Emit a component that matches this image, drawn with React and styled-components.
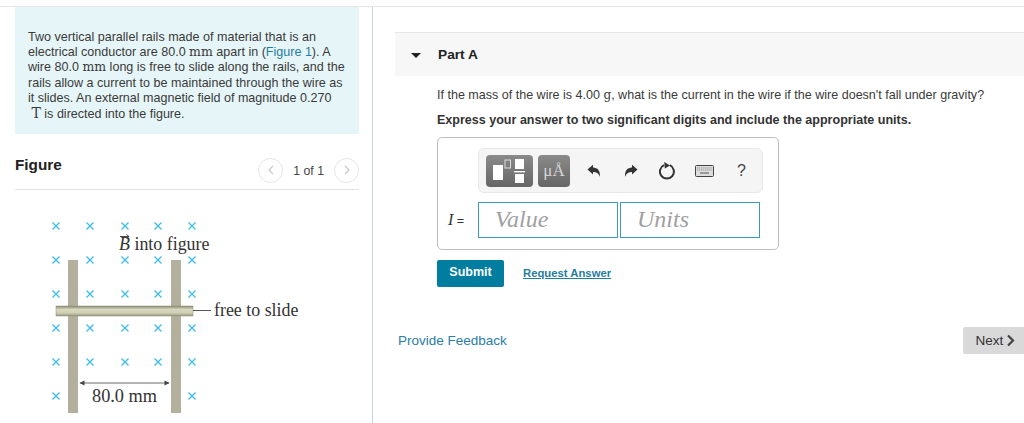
import React from 'react';
import styled, { createGlobalStyle } from 'styled-components';

const GlobalStyle = createGlobalStyle`
  html, body {
    margin: 0;
    padding: 0;
    background: #fff;
  }
  body {
    font-family: "Liberation Sans", Arial, sans-serif;
    color: #333;
    overflow: hidden;
  }
`

const Page = styled.div`
  width: 1024px;
  height: 423px;
  box-sizing: border-box;
  padding-top: 6px;
  overflow: hidden;
`

const Columns = styled.div`
  display: flex;
  height: 417px;
  border-top: 1px solid #e6e6e6;
`

const LeftPane = styled.section`
  width: 373px;
  box-sizing: border-box;
  padding: 0 13px 0 15px;
  border-right: 1px solid #c3d4e4;
`

const Statement = styled.div`
  background: #e6f5f7;
  height: 127px;
  box-sizing: border-box;
  padding: 22.5px 0 0 13px;
  font-size: 12.55px;
  line-height: 15.45px;
  color: #3a3a3a;
  white-space: nowrap;
`

const MathText = styled.span`
  font-family: "DejaVu Serif", "Liberation Serif", serif;
  font-size: ${p => p.$size || 12.5}px;
  line-height: 0;
`

const InlineLink = styled.a`
  color: #1f7d9f;
`

const FigureHead = styled.div`
  display: flex;
  align-items: center;
  justify-content: space-between;
  height: 56px;
  padding-top: 17px;
  box-sizing: border-box;
  border-bottom: 1px solid #e3e3e3;
`

const FigureTitle = styled.h3`
  margin: 0 0 10px;
  font-size: 15.3px;
  font-weight: 700;
  color: #222;
`

const Pager = styled.div`
  display: flex;
  align-items: center;
  gap: 10px;
  font-size: 12.3px;
  color: #444;
`

const PagerLabel = styled.span`
  margin-top: 2px;
`

const PagerButton = styled.span`
  width: 23px;
  height: 23px;
  border: 1px solid #e6e6e6;
  border-radius: 50%;
  display: flex;
  align-items: center;
  justify-content: center;
`

const Diagram = styled.svg`
  display: block;
  margin: 30px 0 0 15px;
`

const RightPane = styled.section`
  flex: 1;
  padding: 25px 0 0 22px;
  min-width: 0;
`

const PartHeader = styled.div`
  height: 44px;
  box-sizing: border-box;
  background: #f7f7f7;
  border-top: 1px solid #e6e6e6;
  display: flex;
  align-items: center;
  gap: 17px;
  padding: 0 0 1px 16px;
  font-size: 13.7px;
  font-weight: 700;
  color: #222;
`

const Caret = styled.span`
  width: 0;
  height: 0;
  border-left: 5px solid transparent;
  border-right: 5px solid transparent;
  border-top: 5px solid #222;
  margin-top: 2px;
`

const PartBody = styled.div`
  padding-left: 42px;
`

const Question = styled.p`
  margin: 11px 0 0;
  font-size: 12.54px;
  line-height: 16px;
  white-space: nowrap;
  color: #3a3a3a;
`

const Instruction = styled.p`
  margin: 9px 0 0;
  font-size: 12.54px;
  line-height: 16px;
  font-weight: 700;
  color: #333;
`

const AnswerBox = styled.div`
  width: 342px;
  height: 113px;
  box-sizing: border-box;
  margin-top: 9px;
  padding: 10px 15px 0 40px;
  border: 1px solid #bdbdbd;
  border-radius: 5px;
`

const Toolbar = styled.div`
  height: 45px;
  width: 285px;
  box-sizing: border-box;
  background: #f5f5f5;
  border: 1px solid #e8e8e8;
  border-radius: 6px;
  display: flex;
  align-items: center;
  padding-left: 7px;
`

const ToolButton = styled.span`
  width: ${p => p.$width}px;
  height: 32px;
  margin-right: 5px;
  border-radius: 4px;
  background: linear-gradient(#8a8a8a, #666);
  display: flex;
  align-items: center;
  justify-content: center;
  color: #d6d6d6;
  font-family: "Liberation Serif", serif;
  font-size: 17px;
`

const ToolIcon = styled.span`
  width: 37px;
  display: flex;
  justify-content: center;
  font-size: 16px;
  color: #444;
`

const InputRow = styled.div`
  display: flex;
  align-items: center;
  margin-top: 9px;
  margin-left: -30px;
`

const VarLabel = styled.label`
  width: 30px;
  font-size: 12.5px;
  color: #333;

  i {
    font-family: "Liberation Serif", serif;
    font-size: 16px;
  }
`

const AnswerInput = styled.div`
  width: 140px;
  height: 36px;
  box-sizing: border-box;
  margin-right: 2px;
  border: 1.5px solid #3a9ab8;
  padding-left: 16px;
  font-family: "Liberation Serif", serif;
  font-style: italic;
  font-size: 24px;
  line-height: 33px;
  color: #a0a0a0;
`

const Actions = styled.div`
  display: flex;
  align-items: center;
  gap: 19px;
  margin-top: 10px;
`

const Submit = styled.button`
  width: 67px;
  height: 27px;
  padding: 0 0 3px;
  border: 0;
  border-radius: 2px;
  background: #007d9f;
  color: #fff;
  font-family: inherit;
  font-size: 12.5px;
  font-weight: 700;
`

const RequestLink = styled.a`
  font-size: 11.3px;
  font-weight: 700;
  color: #1f7d9f;
  text-decoration: underline;
  margin-bottom: 1px;
`

const Footer = styled.div`
  display: flex;
  align-items: center;
  justify-content: space-between;
  margin: 40px 0 0 3px;
`

const Feedback = styled.a`
  font-size: 13.5px;
  color: #2a7da3;
`

const Next = styled.button`
  width: 61px;
  height: 27px;
  padding: 0 0 0 4px;
  border: 0;
  border-radius: 2px 0 0 2px;
  background: #d9d9d9;
  color: #333;
  font-family: inherit;
  font-size: 13.5px;
  display: flex;
  align-items: center;
  justify-content: center;
  gap: 3px;
`

const COLS = [26, 60, 95, 128, 162];
const ROWS = [6, 40, 74, 108, 142, 176];

function Cross({ x, y }) {
  return (
    <path
      d={`M${x - 3.5} ${y - 3.5}L${x + 3.5} ${y + 3.5}M${x + 3.5} ${y - 3.5}L${x - 3.5} ${y + 3.5}`}
      stroke="#3cbcec"
      strokeWidth="1.3"
    />
  );
}

function FigureDrawing() {
  const crosses = [];
  ROWS.forEach((y, r) => {
    COLS.forEach((x, c) => {
      if (r === 5 && c > 0 && c < 4) return;
      crosses.push(<Cross key={`${r}-${c}`} x={x} y={y} />);
    });
  });
  return (
    <Diagram width="290" height="200" viewBox="0 0 290 200">
      <defs>
        <linearGradient id="bar" x1="0" y1="0" x2="0" y2="1">
          <stop offset="0" stopColor="#8b8b72" />
          <stop offset="0.35" stopColor="#d8d8c0" />
          <stop offset="0.7" stopColor="#cfcfb4" />
          <stop offset="1" stopColor="#96967e" />
        </linearGradient>
      </defs>
      {crosses}
      <rect x="38" y="40" width="10" height="153" fill="#b3b19e" />
      <rect x="141" y="40" width="10" height="153" fill="#b3b19e" />
      <rect x="26" y="86" width="137" height="10" fill="url(#bar)" stroke="#8f8f78" strokeWidth="0.5" />
      <path d="M163 90.5H181" stroke="#444" strokeWidth="0.9" />
      <text x="184" y="95.5" fontFamily="Liberation Serif, serif" fontSize="17.9" fill="#333">free to slide</text>
      <text x="89" y="30" fontFamily="Liberation Serif, serif" fontSize="17.9" fill="#333">
        <tspan fontStyle="italic">B</tspan> into figure
      </text>
      <path d="M90 16.5H99M96.5 14.5L99 16.5L96.5 18.5" fill="none" stroke="#333" strokeWidth="0.9" />
      <path d="M50 163H139" stroke="#444" strokeWidth="0.8" />
      <path d="M49.5 163L54.5 160.5V165.5ZM139.5 163L134.5 160.5V165.5Z" fill="#444" />
      <text x="62" y="182" fontFamily="Liberation Serif, serif" fontSize="18.3" fill="#333">80.0 mm</text>
    </Diagram>
  );
}

function TemplateIcon() {
  return (
    <svg width="34" height="24" viewBox="0 0 34 24">
      <rect x="0" y="6" width="10" height="15" fill="#fff" />
      <rect x="12" y="1" width="5.5" height="8" fill="none" stroke="#ddd" strokeWidth="1" />
      <rect x="22" y="0" width="9" height="10" fill="#fff" />
      <rect x="21" y="12" width="11" height="1.4" fill="#fff" />
      <rect x="22" y="15" width="9" height="9" fill="#fff" />
    </svg>
  );
}

function ArrowIcon({ flip }) {
  return (
    <svg width="14" height="14" viewBox="0 0 14 14" style={flip ? { transform: 'scaleX(-1)' } : undefined}>
      <path d="M0.5 5.5L6 0.8V3.6C10.5 3.8 13.3 6.6 13 12.8C11.8 9.6 9.8 8 6 8V10.6Z" fill="#333" />
    </svg>
  );
}

function RefreshIcon() {
  return (
    <svg width="17" height="18" viewBox="0 0 17 18">
      <path d="M10.8 3.2A7 7 0 1 1 5 3.2" fill="none" stroke="#333" strokeWidth="2" />
      <path d="M5.2 0L11 3.4L5.8 6.6Z" fill="#333" />
    </svg>
  );
}

function KeyboardIcon() {
  const keys = [];
  for (let r = 0; r < 2; r++) {
    for (let c = 0; c < 8; c++) {
      keys.push(<rect key={`${r}${c}`} x={2 + c * 1.9} y={2.3 + r * 2} width="1.3" height="1.3" fill="#aaa" />);
    }
  }
  return (
    <svg width="19" height="12" viewBox="0 0 19 12">
      <rect x="0.5" y="0.5" width="18" height="11" rx="1" fill="#ddd" stroke="#444" />
      {keys}
      <rect x="5" y="7" width="9" height="2" fill="#999" />
    </svg>
  );
}

function Chevron({ right }) {
  return (
    <svg width="8" height="12" viewBox="0 0 8 12">
      <path d={right ? 'M2 2L6 6L2 10' : 'M6 2L2 6L6 10'} fill="none" stroke="#c4c4c4" strokeWidth="1.1" />
    </svg>
  );
}

export default function App() {
  return (
    <Page>
      <GlobalStyle />
      <Columns>
        <LeftPane>
          <Statement>
            Two vertical parallel rails made of material that is an<br />
            electrical conductor are 80.0 <MathText>mm</MathText> apart in (<InlineLink>Figure 1</InlineLink>). A<br />
            wire 80.0 <MathText>mm</MathText> long is free to slide along the rails, and the<br />
            rails allow a current to be maintained through the wire as<br />
            it slides. An external magnetic field of magnitude 0.270<br />
            &nbsp;<MathText $size={14}>T</MathText> is directed into the figure.
          </Statement>
          <FigureHead>
            <FigureTitle>Figure</FigureTitle>
            <Pager>
              <PagerButton><Chevron /></PagerButton>
              <PagerLabel>1 of 1</PagerLabel>
              <PagerButton><Chevron right /></PagerButton>
            </Pager>
          </FigureHead>
          <FigureDrawing />
        </LeftPane>
        <RightPane>
          <PartHeader>
            <Caret />
            <span>Part A</span>
          </PartHeader>
          <PartBody>
            <Question>
              If the mass of the wire is 4.00 <MathText $size={12}>g</MathText>, what is the current in the wire if the wire doesn't fall under gravity?
            </Question>
            <Instruction>Express your answer to two significant digits and include the appropriate units.</Instruction>
            <AnswerBox>
              <Toolbar>
                <ToolButton $width={47}><TemplateIcon /></ToolButton>
                <ToolButton $width={32}>μÅ</ToolButton>
                <ToolIcon><ArrowIcon /></ToolIcon>
                <ToolIcon><ArrowIcon flip /></ToolIcon>
                <ToolIcon><RefreshIcon /></ToolIcon>
                <ToolIcon><KeyboardIcon /></ToolIcon>
                <ToolIcon>?</ToolIcon>
              </Toolbar>
              <InputRow>
                <VarLabel><i>I</i> =</VarLabel>
                <AnswerInput>Value</AnswerInput>
                <AnswerInput>Units</AnswerInput>
              </InputRow>
            </AnswerBox>
            <Actions>
              <Submit>Submit</Submit>
              <RequestLink>Request Answer</RequestLink>
            </Actions>
          </PartBody>
          <Footer>
            <Feedback>Provide Feedback</Feedback>
            <Next>
              Next
              <svg width="9" height="13" viewBox="0 0 9 13">
                <path d="M2 1.5L7 6.5L2 11.5" fill="none" stroke="#444" strokeWidth="2.2" />
              </svg>
            </Next>
          </Footer>
        </RightPane>
      </Columns>
    </Page>
  );
}
